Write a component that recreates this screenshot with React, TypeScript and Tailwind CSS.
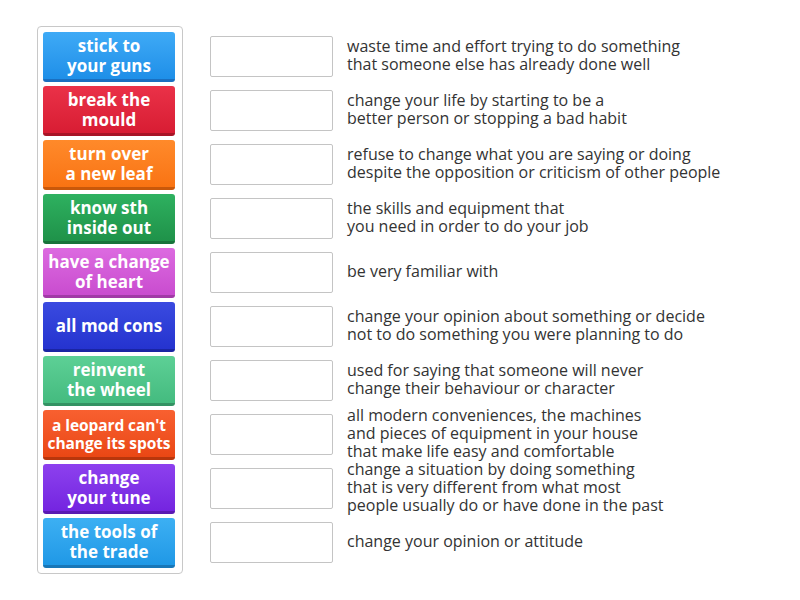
import React from "react";

const tiles = [
  { text: "stick to your guns", lines: ["stick to", "your guns"], cls: "from-[#3eaaf6] to-[#1e8fe8] border-[#1a6fc0]" },
  { text: "break the mould", lines: ["break the", "mould"], cls: "from-[#ea3148] to-[#d81c33] border-[#a81426]" },
  { text: "turn over a new leaf", lines: ["turn over", "a new leaf"], cls: "from-[#ff8a2a] to-[#f97312] border-[#c9580a]" },
  { text: "know sth inside out", lines: ["know sth", "inside out"], cls: "from-[#2eb160] to-[#1f9249] border-[#17733a]" },
  { text: "have a change of heart", lines: ["have a change", "of heart"], cls: "from-[#dc6ae0] to-[#c94ccf] border-[#a13aa6]" },
  { text: "all mod cons", lines: ["all mod cons"], cls: "from-[#3a4ae0] to-[#2533cf] border-[#1a25a3]" },
  { text: "reinvent the wheel", lines: ["reinvent", "the wheel"], cls: "from-[#5dd096] to-[#44bb7f] border-[#339263]" },
  { text: "a leopard can't change its spots", lines: ["a leopard can't", "change its spots"], cls: "from-[#f86030] to-[#ea4714] border-[#b8360c]", small: true },
  { text: "change your tune", lines: ["change", "your tune"], cls: "from-[#8d40ee] to-[#7424e0] border-[#5a19b3]" },
  { text: "the tools of the trade", lines: ["the tools of", "the trade"], cls: "from-[#3cb0f3] to-[#1f98e6] border-[#1877b8]" },
];

const defs = [
  ["waste time and effort trying to do something", "that someone else has already done well"],
  ["change your life by starting to be a", "better person or stopping a bad habit"],
  ["refuse to change what you are saying or doing", "despite the opposition or criticism of other people"],
  ["the skills and equipment that", "you need in order to do your job"],
  ["be very familiar with"],
  ["change your opinion about something or decide", "not to do something you were planning to do"],
  ["used for saying that someone will never", "change their behaviour or character"],
  ["all modern conveniences, the machines", "and pieces of equipment in your house", "that make life easy and comfortable"],
  ["change a situation by doing something", "that is very different from what most", "people usually do or have done in the past"],
  ["change your opinion or attitude"],
];

export default function App() {
  return (
    <div className="w-[800px] h-[600px] bg-white flex items-start pt-[26px] pl-[37px]" style={{ fontFamily: "'Open Sans', sans-serif" }}>
      <div className="w-[146px] border border-[#c8c8c8] rounded-[4px] pt-[5px] pb-[5px] pl-[5px] flex flex-col gap-[4px]">
        {tiles.map((t) => (
          <div
            key={t.text}
            className={`w-[132px] h-[50px] rounded-[3px] border-b-[3px] bg-gradient-to-b ${t.cls} flex flex-col items-center justify-center text-white font-bold ${t.small ? "text-[15.5px] leading-[18px] tracking-[-0.1px]" : "text-[17px] leading-[20px]"}`}
          >
            {t.lines.map((l) => (
              <span key={l} className="whitespace-nowrap">{l}</span>
            ))}
          </div>
        ))}
      </div>
      <div className="flex flex-col pt-[3px] ml-[27px]">
        {defs.map((d, i) => (
          <div key={i} className="h-[54px] flex items-center">
            <div className="w-[123px] h-[41px] border border-[#c4c4c4] rounded-[2px] bg-white shrink-0" />
            <div className="ml-[14px] -mt-[2px] text-[16px] leading-[18px] text-[#333333] whitespace-nowrap">
              {d.map((l) => (
                <div key={l}>{l}</div>
              ))}
            </div>
          </div>
        ))}
      </div>
    </div>
  );
}
